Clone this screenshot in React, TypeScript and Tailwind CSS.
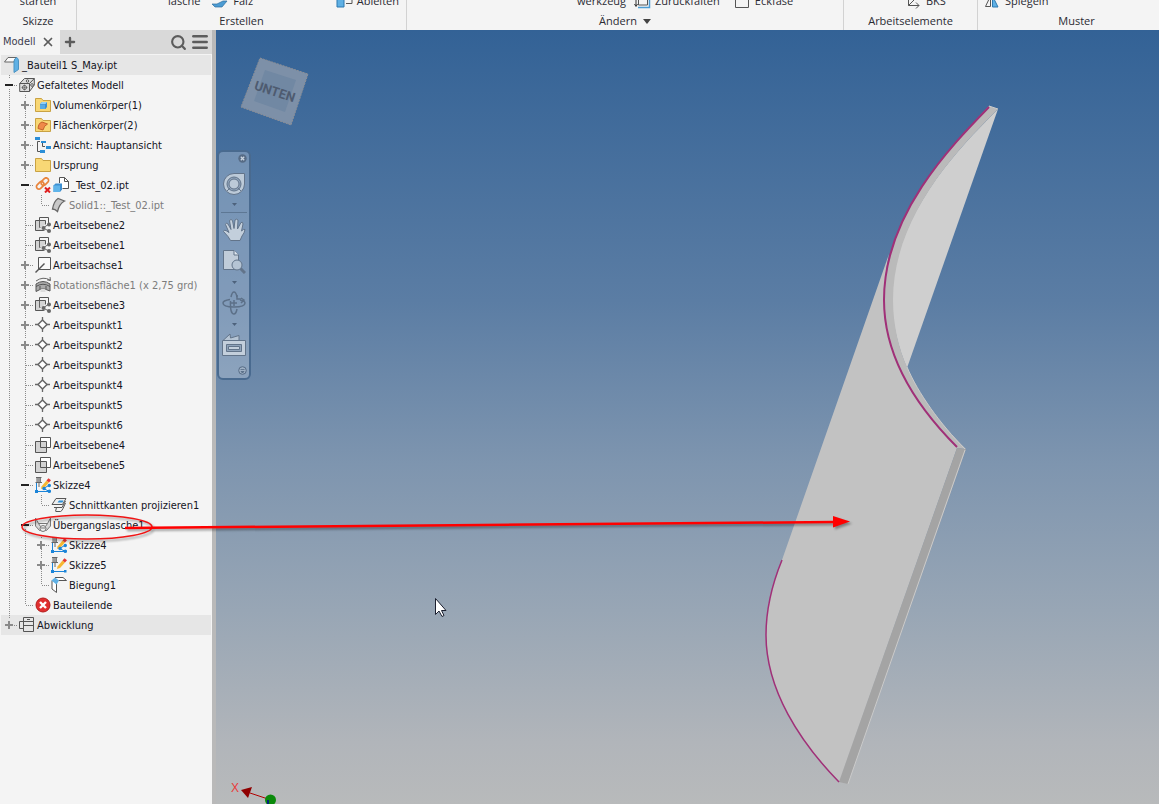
import type { ReactNode } from 'react';
import { Menu, Plus, Search, X } from 'lucide-react';

type IconName =
  | 'part'
  | 'folded'
  | 'folderCube'
  | 'folderSurface'
  | 'folder'
  | 'view'
  | 'link'
  | 'doc'
  | 'surface'
  | 'planeShared'
  | 'plane'
  | 'axis'
  | 'revolve'
  | 'point'
  | 'sketchShared'
  | 'sketch'
  | 'project'
  | 'flange'
  | 'bend'
  | 'end'
  | 'flat';

// One entry per indent column: v = line through, t = line that ends here
type Guide = 'v' | 't';

type TreeRow = {
  label: string;
  icons: IconName[];
  guides: Guide[];
  expander?: 'plus' | 'minus';
  muted?: boolean;
  shaded?: boolean;
};

const ROWS: TreeRow[] = [
  { label: '_Bauteil1 S_May.ipt', icons: ['part'], guides: [], shaded: true },
  { label: 'Gefaltetes Modell', icons: ['folded'], guides: ['v'], expander: 'minus' },
  { label: 'Volumenkörper(1)', icons: ['folderCube'], guides: ['v', 'v'], expander: 'plus' },
  { label: 'Flächenkörper(2)', icons: ['folderSurface'], guides: ['v', 'v'], expander: 'plus' },
  { label: 'Ansicht: Hauptansicht', icons: ['view'], guides: ['v', 'v'], expander: 'plus' },
  { label: 'Ursprung', icons: ['folder'], guides: ['v', 'v'], expander: 'plus' },
  { label: '_Test_02.ipt', icons: ['link', 'doc'], guides: ['v', 'v'], expander: 'minus' },
  { label: 'Solid1::_Test_02.ipt', icons: ['surface'], guides: ['v', 'v', 't'], muted: true },
  { label: 'Arbeitsebene2', icons: ['planeShared'], guides: ['v', 'v'] },
  { label: 'Arbeitsebene1', icons: ['planeShared'], guides: ['v', 'v'] },
  { label: 'Arbeitsachse1', icons: ['axis'], guides: ['v', 'v'], expander: 'plus' },
  {
    label: 'Rotationsfläche1 (x 2,75 grd)',
    icons: ['revolve'],
    guides: ['v', 'v'],
    expander: 'plus',
    muted: true,
  },
  { label: 'Arbeitsebene3', icons: ['planeShared'], guides: ['v', 'v'], expander: 'plus' },
  { label: 'Arbeitspunkt1', icons: ['point'], guides: ['v', 'v'], expander: 'plus' },
  { label: 'Arbeitspunkt2', icons: ['point'], guides: ['v', 'v'], expander: 'plus' },
  { label: 'Arbeitspunkt3', icons: ['point'], guides: ['v', 'v'] },
  { label: 'Arbeitspunkt4', icons: ['point'], guides: ['v', 'v'] },
  { label: 'Arbeitspunkt5', icons: ['point'], guides: ['v', 'v'] },
  { label: 'Arbeitspunkt6', icons: ['point'], guides: ['v', 'v'] },
  { label: 'Arbeitsebene4', icons: ['plane'], guides: ['v', 'v'] },
  { label: 'Arbeitsebene5', icons: ['plane'], guides: ['v', 'v'] },
  { label: 'Skizze4', icons: ['sketchShared'], guides: ['v', 'v'], expander: 'minus' },
  { label: 'Schnittkanten projizieren1', icons: ['project'], guides: ['v', 'v', 't'] },
  { label: 'Übergangslasche1', icons: ['flange'], guides: ['v', 'v'], expander: 'minus' },
  { label: 'Skizze4', icons: ['sketchShared'], guides: ['v', 'v', 'v'], expander: 'plus' },
  { label: 'Skizze5', icons: ['sketch'], guides: ['v', 'v', 'v'], expander: 'plus' },
  { label: 'Biegung1', icons: ['bend'], guides: ['v', 'v', 't'] },
  { label: 'Bauteilende', icons: ['end'], guides: ['v', 't'] },
  { label: 'Abwicklung', icons: ['flat'], guides: ['t'], expander: 'plus', shaded: true },
];

export default function App() {
  return (
    <div className="flex h-screen flex-col overflow-hidden bg-[#f4f4f4] font-['Open_Sans','Noto_Sans',sans-serif] text-[11px] text-[#2b2b33]">
      <Ribbon />
      <main className="relative flex min-h-0 flex-1">
        <ModelBrowser />
        <Viewport />
        <Annotation />
      </main>
    </div>
  );
}

function Ribbon() {
  return (
    <header className="flex h-[30px] shrink-0 overflow-hidden whitespace-nowrap">
      <RibbonPanel title="Skizze" className="w-[77px] shrink-0">
        <RibbonItem label="starten" className="mx-auto" />
      </RibbonPanel>
      <RibbonPanel title="Erstellen" className="w-[330px] shrink-0">
        <RibbonItem label="lasche" className="ml-[91px]" />
        <RibbonItem label="Falz" className="ml-3">
          <path d="M0 11h5l6-3h4l-5 6H3z" fill="#4c9cd3" stroke="#2f6f9f" strokeWidth=".7" />
        </RibbonItem>
        <RibbonItem label="Ableiten" className="mr-[7px] ml-auto">
          <path d="M1 5h7v9H1z" fill="#5fb0e4" stroke="#2c79b0" />
          <path d="M10 10.500h6V3" fill="none" stroke="#555" />
        </RibbonItem>
      </RibbonPanel>
      <RibbonPanel title="Ändern" className="w-[437px] shrink-0" arrow>
        <RibbonItem label="werkzeug" className="ml-[170px]" />
        <RibbonItem label="Zurückfalten" className="ml-2">
          <path d="M4.500 2v10h9V2" fill="none" stroke="#555" />
          <path d="M2 3v10M0.500 11L2 13.500 3.500 11" fill="none" stroke="#333" />
          <path d="M4 14.500h11.500V3" fill="none" stroke="#4c9cd3" strokeWidth="1.500" />
        </RibbonItem>
        <RibbonItem label="Eckfase" className="ml-[14px]">
          <path d="M1.500 2v12.500h13V2" fill="none" stroke="#555" />
        </RibbonItem>
      </RibbonPanel>
      <RibbonPanel title="Arbeitselemente" className="w-[134px] shrink-0">
        <RibbonItem label="BKS" className="ml-[61px]">
          <path d="M3.500 2v10.500H14M3.500 12.500L11 5M11 9.500l3 3-3 3" fill="none" stroke="#555" />
        </RibbonItem>
      </RibbonPanel>
      <RibbonPanel title="Muster" className="min-w-[197px] flex-1">
        <RibbonItem label="Spiegeln" className="ml-[6px]">
          <path d="M1.500 13.500H6.500V3z" fill="none" stroke="#555" />
          <path d="M8.500 3v11H14z" fill="#5fb0e4" stroke="#2c79b0" />
        </RibbonItem>
      </RibbonPanel>
    </header>
  );
}

function RibbonPanel({
  title,
  className,
  arrow,
  children,
}: {
  title: string;
  className: string;
  arrow?: boolean;
  children: ReactNode;
}) {
  return (
    <section
      className={`flex flex-col justify-end gap-1 border-r border-[#d2d2d2] pb-px last:border-r-0 ${className}`}
    >
      <div className="flex h-4 shrink-0 items-center">{children}</div>
      <h2 className="flex h-4 shrink-0 items-center justify-center gap-1.5 leading-4">
        {title}
        {arrow && (
          <svg width="8" height="5" viewBox="0 0 8 5" aria-hidden="true">
            <path d="M0 0h8L4 5z" fill="#444" />
          </svg>
        )}
      </h2>
    </section>
  );
}

function RibbonItem({
  label,
  className,
  children,
}: {
  label: string;
  className: string;
  children?: ReactNode;
}) {
  return (
    <button type="button" className={`flex h-4 items-center gap-1 leading-4 ${className}`}>
      {children && (
        <svg width="17" height="16" viewBox="0 0 17 16" aria-hidden="true">
          {children}
        </svg>
      )}
      {label}
    </button>
  );
}

function ModelBrowser() {
  return (
    <aside className="flex w-[216px] shrink-0 flex-col border-r-4 border-[#b9b9b9] font-['DejaVu_Sans_Condensed','DejaVu_Sans',sans-serif]">
      <div className="flex h-6 items-center bg-[#d9d9d9] text-[#5c5c5c]">
        <div className="flex h-full w-[60px] items-center justify-between bg-[#f4f4f4] pr-[5px] pl-[3px]">
          <span className="text-[#3c3c50]">Modell</span>
          <button type="button" aria-label="Schließen">
            <X size={14} strokeWidth={3} />
          </button>
        </div>
        <button type="button" aria-label="Browser hinzufügen" className="ml-[3px]">
          <Plus size={14} strokeWidth={4} />
        </button>
        <button type="button" aria-label="Suchen" className="ml-auto">
          <Search size={17} strokeWidth={3} />
        </button>
        <button type="button" aria-label="Menü" className="mr-0.5 ml-[3px]">
          <Menu size={20} strokeWidth={3} />
        </button>
      </div>
      <ul className="px-px pt-px">
        {ROWS.map((row, index) => (
          <TreeItem key={index} row={row} />
        ))}
      </ul>
    </aside>
  );
}

function TreeItem({ row }: { row: TreeRow }) {
  const last = row.guides.length - 1;
  const isRoot = last < 0;

  return (
    <li
      className={`flex h-5 items-center whitespace-nowrap ${row.shaded ? 'bg-[#e6e6e6]' : ''} ${
        row.muted ? 'text-[#7c7c7c]' : 'text-[#14141e]'
      }`}
    >
      {row.guides.map((guide, index) => (
        <GuideCell
          key={index}
          guide={guide}
          connect={index === last}
          expander={index === last ? row.expander : undefined}
        />
      ))}
      <span className={`flex gap-0.5 ${isRoot ? 'pl-[3px]' : 'pl-0.5'}`}>
        {row.icons.map((name) => (
          <TreeIcon key={name} name={name} />
        ))}
      </span>
      <span className="pt-0.5 pl-0.5 leading-4">{row.label}</span>
    </li>
  );
}

function GuideCell({
  guide,
  connect,
  expander,
}: {
  guide: Guide;
  connect: boolean;
  expander?: 'plus' | 'minus';
}) {
  const lines = (
    <svg width="16" height="20" viewBox="0 0 16 20" className="block" aria-hidden="true">
      <g stroke="#8a8a8a" strokeDasharray="1 1" shapeRendering="crispEdges">
        {!expander && <path d={guide === 'v' ? 'M8.500 0V20' : 'M8.500 0V10'} />}
        {expander && <path d={guide === 'v' ? 'M8.500 0V4M8.500 14V20' : 'M8.500 0V4'} />}
        {connect && <path d={expander ? 'M13 10.500H16' : 'M9 10.500H16'} />}
      </g>
      {expander === 'plus' && <path d="M4 10H12M8 6V14" stroke="#8a8a8a" strokeWidth="2" />}
      {expander === 'minus' && <path d="M4 10H12" stroke="#222" strokeWidth="2" />}
    </svg>
  );

  if (!expander) return lines;

  return (
    <button type="button" aria-label={expander === 'plus' ? 'Erweitern' : 'Reduzieren'}>
      {lines}
    </button>
  );
}

function TreeIcon({ name }: { name: IconName }) {
  return (
    <svg width="16" height="16" viewBox="0 0 16 16" fill="none" aria-hidden="true">
      {ICONS[name]}
    </svg>
  );
}

const FOLDER = (
  <path d="M.5 1.500H6.500L8 3.500H15.500V14.500H.5z" fill="#f8d775" stroke="#c9a243" />
);

const SHARED_PLANE = (
  <>
    <path d="M4.500 3V.5H13.500V7" stroke="#555" />
    <path d="M.5 3.500H10.500V13.500H.5z" fill="#d3d3d3" stroke="#555" />
    <path d="M4.500 4V10.500H10" stroke="#666" />
    <path d="M14 7L7.500 11L14 14" stroke="#f4f4f4" strokeWidth="3" />
    <path d="M14 7L8 11L14 14" stroke="#666" />
    <circle cx="14" cy="7.500" r="2" fill="#666" />
    <circle cx="8.500" cy="11" r="2" fill="#666" />
    <circle cx="14" cy="14" r="2" fill="#666" />
  </>
);

const PIN_AND_AXES = (
  <>
    <path d="M1.500 5V13M3 14.500H13" stroke="#1b84d8" />
    <path d="M0 13h3v3H0zM13 13h2.500v2.500H13z" fill="#1b84d8" />
    <path d="M1 .5H6.500M2 1V5M5.500 1V5M.5 5.500H7M4 6V10" stroke="#666" />
    <path d="M2 1h3.500v4H2z" fill="#999" />
  </>
);

const PENCIL = (
  <>
    <path d="M6.500 9.500L11.500 3.500L14 5.500L9 11L6 12z" fill="#f7b733" />
    <path d="M11.500 3.500L13.500 1.200L16 3.300L14 5.500z" fill="#e53935" />
  </>
);

const ICONS: Record<IconName, ReactNode> = {
  part: (
    <>
      <path d="M.5 5L4 .5H13Q10 2 10 5z" fill="#fafafa" stroke="#666" />
      <path d="M10 15.500V5Q10 1.500 12.500 .5Q14.500 1 14.500 4V12.500z" fill="#5fb0e4" stroke="#4b94c4" />
    </>
  ),
  folded: (
    <>
      <path d="M.7 6.500L5.500 1.500H15.300V8L10.500 14.500H.7z" fill="#ddd" stroke="#555" />
      <path d="M.7 6.500H10.500V14.500M10.500 6.500L15.300 1.500" stroke="#555" />
      <circle cx="5.500" cy="10.500" r="2" fill="#fff" stroke="#555" />
      <circle cx="8.500" cy="4" r="1.200" fill="#fff" stroke="#555" />
      <circle cx="13" cy="8" r="1.300" fill="#fff" stroke="#555" />
      <path d="M5.500 7.500V13.500M2.500 10.500H8.500" stroke="#555" strokeWidth=".6" />
    </>
  ),
  folderCube: (
    <>
      {FOLDER}
      <path d="M5 7L7 5H12V10L10.500 12H5z" fill="#3d8fd1" />
      <path d="M5 7.500H10V12H5z" fill="#56abe6" />
      <path d="M5 7L7 5H12L10.500 7z" fill="#93d0f6" />
    </>
  ),
  folderSurface: (
    <>
      {FOLDER}
      <path d="M3 11.500Q3.500 6 7 5L12.500 7Q9 8.500 8 13z" fill="#ef8a4a" stroke="#c4622b" />
    </>
  ),
  folder: FOLDER,
  view: (
    <>
      <path d="M5 4.500H2.500V14.500H5M7.500 5.500V9.500H10" stroke="#555" />
      <path d="M0 0h5v3H0zM11 9h5v3h-5zM5 13h5v3H5z" fill="#2b8ed6" />
      <path d="M6 4h5v2H6z" fill="#2b8ed6" />
    </>
  ),
  link: (
    <>
      <g stroke="#e8843c" strokeWidth="1.700">
        <rect x="1" y="6" width="8.500" height="5" rx="2.500" transform="rotate(-45 5 8.500)" />
        <rect x="5.500" y="2" width="8.500" height="5" rx="2.500" transform="rotate(-45 10 4.500)" />
      </g>
      <path d="M10 10.500L15 15.500M15 10.500L10 15.500" stroke="#e02020" strokeWidth="2" />
    </>
  ),
  doc: (
    <>
      <path d="M6.500 6V.5H11.500L15.500 4.500V11.500H9.500" fill="#fff" stroke="#555" />
      <path d="M11.500 .5V4.500H15.500" stroke="#555" />
      <path d="M.5 8.500L2.500 6.500H9V12.500L7 15H.5z" fill="#3d8fd1" />
      <path d="M.5 8.500H7V15H.5z" fill="#5fb4ea" />
    </>
  ),
  surface: (
    <path d="M1.500 12Q3 4 7 1.500L13.500 4Q8.500 6.500 6.500 14.500Q4 12 1.500 12z" fill="#c8c8c8" stroke="#666" strokeWidth="1.300" />
  ),
  planeShared: SHARED_PLANE,
  plane: (
    <>
      <path d="M5.500 .5H15.500V10.500H5.500z" fill="#fff" stroke="#555" />
      <path d="M.5 4.500H11.500V15.500H.5z" fill="#d3d3d3" stroke="#555" />
      <path d="M5.500 4V10.500H11.500" stroke="#555" />
    </>
  ),
  axis: (
    <>
      <path d="M3.500 .5H15.500V12.500H3.500z" fill="#fafafa" stroke="#555" />
      <path d="M.5 15.500L9.500 6.500" stroke="#555" strokeWidth="1.400" />
    </>
  ),
  revolve: (
    <>
      <path d="M1 4Q8-1 15 3M12 2.800l3.500.8L15 0" stroke="#666" />
      <path d="M1 7Q8 2 15 7V14L11 12.500Q8 11 5 12.500L1 14.500z" fill="#aaa" stroke="#555" />
      <path d="M1 9.500Q8 5 15 9.500M5 12V9M11 12V9" stroke="#555" />
      <path d="M5.500 12.500Q8 11 10.500 12.500V15H5.500z" fill="#ddd" />
    </>
  ),
  point: (
    <>
      <path d="M7.500 3L12 7.500L7.500 12L3 7.500z" fill="#fff" stroke="#666" strokeWidth="1.500" />
      <path d="M7.500 0V3M7.500 12V15M0 7.500H3M12 7.500H15" stroke="#666" strokeWidth="1.300" />
    </>
  ),
  sketchShared: (
    <>
      {PIN_AND_AXES}
      {PENCIL}
      <path d="M14.500 8L8.500 11.500L14.500 14.500" stroke="#1b84d8" />
      <circle cx="14.300" cy="8.500" r="1.700" fill="#1b84d8" />
      <circle cx="9" cy="11.500" r="1.700" fill="#1b84d8" />
      <circle cx="14.300" cy="14.300" r="1.700" fill="#1b84d8" />
    </>
  ),
  sketch: (
    <>
      {PIN_AND_AXES}
      {PENCIL}
    </>
  ),
  project: (
    <>
      <path d="M1 7.500L5 1.500H15L11.500 7.500z" fill="#eee" stroke="#555" />
      <path d="M6.500 5.500L8 3.500H12.500L11.500 5.500z" fill="#2b8ed6" />
      <path d="M3 10.500H11L14.500 4M5 14.500H9.500Q11 14 12 11.500L14.500 6M5.500 10.500L4.500 14.500" stroke="#555" />
    </>
  ),
  flange: (
    <>
      <path d="M.5 1V9L4.500 13.500H11.500L15.500 9V1L12.500 6.500H3.500z" fill="#d6d6d6" stroke="#777" />
      <path d="M3.500 6.500L5.500 9.500H10.500L12.500 6.500z" fill="#f4f4f4" stroke="#777" />
      <circle cx="8" cy="11.500" r="3" fill="#eee" stroke="#777" />
      <path d="M5.500 11H10.500" stroke="#777" />
    </>
  ),
  bend: (
    <>
      <path d="M1 3.500V12L5.500 15.500V6.500" fill="#fff" stroke="#555" />
      <path d="M4 .5H12L15.500 3.500H7.500" fill="#fff" stroke="#555" />
      <path d="M.5 3.500L4 .5L8 3.500L5.500 7.500z" fill="#5fb0e4" />
    </>
  ),
  end: (
    <>
      <circle cx="8" cy="8" r="7" fill="#e02f2f" stroke="#b31c1c" />
      <path d="M5 5L11 11M11 5L5 11" stroke="#fff" strokeWidth="2.400" />
    </>
  ),
  flat: (
    <>
      <path d="M4.500 .5H14.500V14.500H4.500zM.5 4.500H4.500M.5 11.500H4.500M.5 4.500V11.500M4.500 4.500H14.500M4.500 8.500H14.500" stroke="#555" />
      <path d="M8 2.500H11" stroke="#555" />
    </>
  ),
};

function Viewport() {
  return (
    <section
      aria-label="Modellansicht"
      className="relative min-w-0 flex-1 overflow-hidden bg-[linear-gradient(to_bottom,#336296_0%,#5b7da4_35%,#7e95af_56%,#98a6b5_75%,#b1b5ba_92%,#b8babb_100%)]"
    >
      <Scene />
      <NavigationBar />
    </section>
  );
}

function Scene() {
  return (
    <svg
      className="absolute inset-0 size-full"
      viewBox="216 30 943 774"
      preserveAspectRatio="xMinYMin meet"
      aria-hidden="true"
    >
      {/* sheet metal body */}
      <path
        d="M889 254L782 560C773 582 766 605 766 635C766 690 800 742 839 782L957 448C920 410 884 360 884 300C884 284 886 268 889 254z"
        fill="#c2c2c2"
      />
      <path d="M998 109C960 147 892 215 892 300C892 325 899 349 907 368z" fill="#cfcfcf" />
      <path
        d="M989 106L998 109C960 147 893 215 893 300C893 325 899 349 907 367C918 393 940 424 966 449L957 448C920 410 884 360 884 300C884 215 950 147 989 106z"
        fill="#bababa"
      />
      <path d="M957 448L966 449L848 784L839 782z" fill="#a4a4a4" />
      <path
        d="M965 450L848 784M907 367C918 393 940 424 965 449M989 106L998 109"
        stroke="#cbcbcb"
        fill="none"
      />
      <g fill="none" stroke="#a03078">
        <path d="M989 107C950 147 884 215 884 300C884 360 920 410 957 447" strokeWidth="2" />
        <path d="M782 560C773 582 766 605 766 635C766 690 800 742 839 782" strokeWidth="1.500" />
      </g>

      {/* view cube */}
      <path d="M260 58L308 74L291 125L241 107z" fill="#7d90a8" stroke="#8c8f96" strokeDasharray="2 1" />
      <path d="M265 70L296 80L285 112L254 101z" fill="#7188a3" />
      <text
        x="275"
        y="96"
        textAnchor="middle"
        transform="rotate(18 275 91)"
        fill="#4e5b70"
        className="font-['Roboto',sans-serif] text-[13px] font-bold"
      >
        UNTEN
      </text>

      {/* axis triad */}
      <path d="M250 793L268 799" stroke="#b00000" />
      <path d="M241 790L252 787L248 798z" fill="#8f0000" />
      <circle cx="270.500" cy="800" r="5.500" fill="#0a8a0a" />
      <path d="M268 800v4" stroke="#0000a0" strokeWidth="1.500" />
      <text x="231" y="792" fill="#e83c3c" className="font-['Liberation_Sans',sans-serif] text-xs">
        X
      </text>

      {/* mouse pointer */}
      <path
        d="M435.500 598.500V614.500L439 611L442 616.500L444 615.500L441.500 610.500H446z"
        fill="#fff"
        stroke="#1c2030"
      />
    </svg>
  );
}

function NavigationBar() {
  return (
    <nav
      aria-label="Navigation"
      className="absolute top-[120px] left-px flex w-[34px] flex-col items-center rounded-md border-2 border-[#496a8f] bg-[#c9d5e2]/35"
    >
      <NavButton label="Leiste schließen" className="h-3 self-end pr-0.5">
        <svg width="9" height="9" viewBox="0 0 9 9">
          <circle cx="4.500" cy="4.500" r="4.200" fill="#566b85" />
          <path d="M2.800 2.800L6.200 6.200M6.200 2.800L2.800 6.200" stroke="#cbd5e0" strokeWidth="1.300" />
        </svg>
      </NavButton>
      <NavButton label="SteeringWheel" className="mt-1 h-8">
        <svg width="24" height="24" viewBox="0 0 24 24" stroke="#62748a">
          <path d="M12 1.500H22.500V12A10.500 10.500 0 1 1 12 1.500z" fill="#bccad8" />
          <circle cx="12" cy="12" r="7" fill="#8fa3ba" />
          <circle cx="12" cy="12" r="5" fill="#bccad8" />
          <path d="M5 19L8.500 15.500M19 19L15.500 15.500" />
        </svg>
      </NavButton>
      <DropArrow />
      <hr className="mt-1 w-[26px] border-[#5d7794]" />
      <NavButton label="Pan" className="mt-px h-8">
        <svg width="24" height="24" viewBox="0 0 24 24" fill="#c3cfdc" stroke="#62748a">
          <path d="M8.500 22.500L6 18.500L1.500 13.500Q1.500 11.500 4 12.500L7 14.500L3.500 6.500Q4 4 6 6L9 11.500L7.500 2.500Q9 .5 10.500 2.500L12 10.500L13 2Q14.500 .3 16 2L15.500 11L19 4.500Q21 3.500 21 6L19.500 13Q22 10.500 23 11.500Q22.500 15 20 18L18 22.500z" />
        </svg>
      </NavButton>
      <NavButton label="Zoom" className="h-8">
        <svg width="24" height="24" viewBox="0 0 24 24" stroke="#62748a">
          <path d="M1.500 .5H12L16.500 5V19.500H1.500z" fill="#c0ccd9" />
          <path d="M12 .5V5H16.500" fill="#e0e7ee" />
          <path d="M18.500 18.500L23 23" strokeWidth="3" />
          <circle cx="15" cy="15" r="5" fill="#b5c4d4" />
        </svg>
      </NavButton>
      <DropArrow />
      <NavButton label="Orbit" className="h-[34px]">
        <svg width="24" height="24" viewBox="0 0 24 24" fill="none" stroke="#5c7088" strokeWidth="1.500">
          <path d="M8 8.500Q1 9.500 1 12Q1 16 12 16Q23 16 23 12Q23 10 18 9" />
          <path d="M9 6Q10 1 12 1Q14 1 15 6M8.500 10Q8 23 12 23Q14 23 15 18" />
          <path d="M9 12H15M12 9V15M15 4V8H19M19 7L22 9L19 12" />
        </svg>
      </NavButton>
      <DropArrow />
      <NavButton label="ShowMotion" className="h-[34px]">
        <svg width="24" height="24" viewBox="0 0 24 24" stroke="#62748a">
          <path d="M1 7.500L8 1L8.500 5L17 2.500V7" fill="#b5c4d4" />
          <path d="M.5 7.500H23.500V22.500H.5z" fill="#c3cfdc" />
          <path d="M4.500 11.500H19.500V18.500H4.500z" fill="#8fa3ba" />
          <path d="M6.500 13.500H17.500V16.500H6.500z" fill="#c3cfdc" />
        </svg>
      </NavButton>
      <NavButton label="Leiste anpassen" className="h-4 self-end pr-0.5">
        <svg width="9" height="9" viewBox="0 0 9 9">
          <circle cx="4.500" cy="4.500" r="3.800" fill="#9eb0c4" stroke="#566b85" />
          <path d="M2.500 3.500H6.500M3 5.500H6L4.500 7z" fill="#566b85" stroke="#566b85" strokeWidth=".8" />
        </svg>
      </NavButton>
    </nav>
  );
}

function NavButton({
  label,
  className,
  children,
}: {
  label: string;
  className: string;
  children: ReactNode;
}) {
  return (
    <button type="button" aria-label={label} className={`flex items-center ${className}`}>
      {children}
    </button>
  );
}

function DropArrow() {
  return (
    <button type="button" aria-label="Optionen" className="flex h-2 items-center">
      <svg width="5" height="3" viewBox="0 0 5 3">
        <path d="M0 0h5L2.500 3z" fill="#4d627c" />
      </svg>
    </button>
  );
}

// Red markup that leads from the flange feature to its body
function Annotation() {
  return (
    <svg
      className="pointer-events-none absolute inset-0 size-full drop-shadow-[2px_2px_1px_rgba(0,0,0,0.35)]"
      viewBox="0 30 1159 774"
      preserveAspectRatio="xMinYMin meet"
      aria-hidden="true"
    >
      <ellipse cx="87" cy="527" rx="65" ry="12" fill="none" stroke="#f01414" strokeWidth="1.500" />
      <path d="M125 528L834 522" stroke="#f00" strokeWidth="2.500" />
      <path d="M833 516L850 521.500L833 527.500z" fill="#f00" />
    </svg>
  );
}
